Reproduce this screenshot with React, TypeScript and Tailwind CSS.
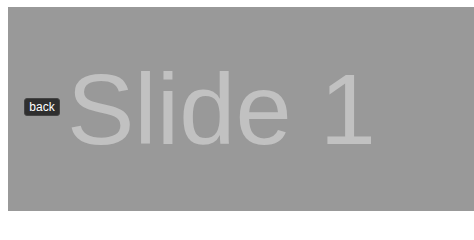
import React from 'react';

export default function App() {
  return (
    <div className="w-[474px] h-[219px] bg-white overflow-hidden pt-[7px] pl-2">
      <div
        className="w-[480px] h-[204px] bg-[#999999] flex items-center pl-4"
        style={{ fontFamily: '"Liberation Sans", Arial, sans-serif' }}
      >
        <button className="h-[18px] w-[36px] rounded-[3px] bg-[#2f2f2f] border border-[#444] text-white text-[12px] leading-none flex items-center justify-center -mt-[5px]">
          back
        </button>
        <span className="ml-[7px] text-[101px] leading-none text-[#c1c1c1] whitespace-nowrap">
          Slide 1
        </span>
      </div>
    </div>
  );
}
